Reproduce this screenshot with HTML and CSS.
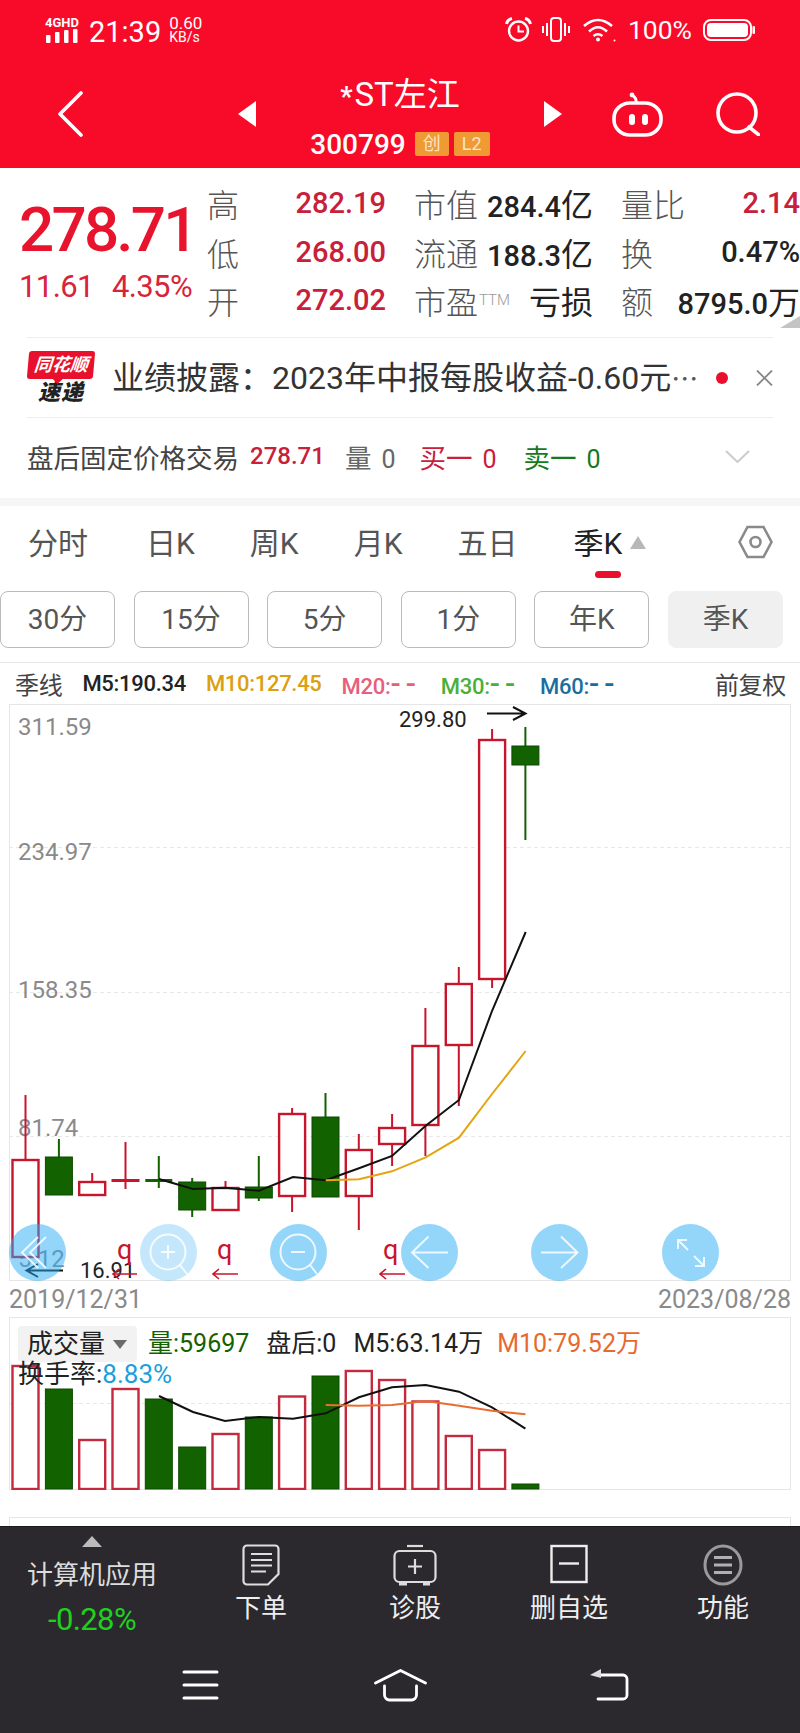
FILE: index.html
```html
<!DOCTYPE html>
<html lang="zh">
<head>
    <meta charset="UTF-8">
    <meta name="viewport" content="width=device-width, initial-scale=1.0">
    <title>*ST左江</title>
    <link rel="stylesheet" href="styles.css">
</head>
<body>
    <header class="header">
        <div class="status">
            <svg class="signal" width="34" height="27" viewBox="0 0 34 27">
                <text x="0" y="11" class="signal-text">4GHD</text>
                <rect x="1" y="19" width="4.5" height="8" rx="1" fill="#fff"/>
                <rect x="10" y="16" width="4.5" height="11" rx="1" fill="#fff"/>
                <rect x="19" y="14" width="4.5" height="13" rx="1" fill="#fff"/>
                <rect x="28" y="13" width="4.5" height="14" rx="1" fill="#fff"/>
            </svg>
            <span class="clock">21:39</span>
            <div class="speed"><span>0.60</span><span class="speed-unit">KB/s</span></div>
            <div class="status-right">
                <svg width="27" height="25" viewBox="0 0 27 25" fill="none" stroke="#fff" stroke-width="2.4">
                    <circle cx="13.5" cy="14" r="9.5"/>
                    <path d="M13.5 8.5V14.5H19" stroke-width="2"/>
                    <path d="M1.5 7Q2.5 2.5 7 1.5M25.5 7Q24.5 2.5 20 1.5" stroke-width="3"/>
                </svg>
                <svg class="vibrate" width="28" height="25" viewBox="0 0 28 25" fill="none" stroke="#fff" stroke-width="2">
                    <rect x="9" y="1" width="10" height="23" rx="3"/>
                    <path d="M5 6V19M23 6V19M1 9V16M27 9V16"/>
                </svg>
                <svg class="wifi" width="33" height="25" viewBox="0 0 33 25" fill="none" stroke="#fff" stroke-width="2.6">
                    <path d="M1 9Q15 -3 29 9M6 14.5Q15 6 24 14.5M10.5 19Q15 15.5 19.5 19"/>
                    <circle cx="15" cy="22.5" r="2" fill="#fff" stroke="none"/>
                    <circle cx="31.5" cy="23.5" r="1" fill="#fff" stroke="none"/>
                </svg>
                <span class="battery-text">100%</span>
                <svg class="battery" width="52" height="22" viewBox="0 0 52 22">
                    <rect x="1" y="1" width="47" height="20" rx="7" fill="none" stroke="#fff" stroke-width="2"/>
                    <rect x="4" y="4" width="41" height="14" rx="4" fill="#fff"/>
                    <rect x="49.5" y="7" width="2.5" height="8" rx="1" fill="#fff"/>
                </svg>
            </div>
        </div>
        <nav class="topnav">
            <svg class="back" width="26" height="46" viewBox="0 0 26 46" fill="none" stroke="#fff" stroke-width="3.6" stroke-linecap="round" stroke-linejoin="round">
                <path d="M24 2L3 23L24 44"/>
            </svg>
            <div class="tri-left"></div>
            <div class="title-box">
                <div class="stock-name"><span class="star">*</span>ST左江</div>
                <div class="stock-code">
                    <span>300799</span>
                    <span class="badge">创</span>
                    <span class="badge badge-wide">L2</span>
                </div>
            </div>
            <div class="tri-right"></div>
            <svg class="robot" width="51" height="45" viewBox="0 0 51 45" fill="none" stroke="#fff" stroke-width="3.6">
                <rect x="2" y="11" width="47" height="32" rx="16" ry="15"/>
                <path d="M24 11Q25 6 20 3" stroke-width="3"/>
                <circle cx="20" cy="3" r="2.4" fill="#fff" stroke="none"/>
                <rect x="17" y="22" width="6" height="11" rx="3" fill="#fff" stroke="none"/>
                <rect x="30" y="22" width="6" height="11" rx="3" fill="#fff" stroke="none"/>
            </svg>
            <svg class="search" width="44" height="44" viewBox="0 0 44 44" fill="none" stroke="#fff" stroke-width="3.6" stroke-linecap="round">
                <circle cx="21" cy="21" r="19"/>
                <path d="M33 35L43 43"/>
            </svg>
        </nav>
    </header>

    <section class="quote">
        <div class="price-box">
            <div class="price">278.71</div>
            <div class="change"><span>11.61</span><span>4.35%</span></div>
        </div>
        <div class="stats">
            <div class="stat"><span class="stat-label">高</span><span class="red">282.19</span></div>
            <div class="stat"><span class="stat-label">市值</span><span>284.4<span class="unit">亿</span></span></div>
            <div class="stat"><span class="stat-label">量比</span><span class="red">2.14</span></div>
            <div class="stat"><span class="stat-label">低</span><span class="red">268.00</span></div>
            <div class="stat"><span class="stat-label">流通</span><span>188.3<span class="unit">亿</span></span></div>
            <div class="stat"><span class="stat-label">换</span><span>0.47%</span></div>
            <div class="stat"><span class="stat-label">开</span><span class="red">272.02</span></div>
            <div class="stat"><span class="stat-label">市盈<span class="ttm">TTM</span></span><span class="unit">亏损</span></div>
            <div class="stat"><span class="stat-label">额</span><span>8795.0<span class="unit">万</span></span></div>
        </div>
        <div class="corner"></div>
    </section>

    <section class="news">
        <div class="logo">
            <div class="logo-flag">同花顺</div>
            <div class="logo-sub">速递</div>
        </div>
        <div class="news-text">业绩披露：2023年中报每股收益-0.60元<span class="dots">…</span></div>
        <div class="news-dot"></div>
        <svg width="17" height="16" viewBox="0 0 17 16" fill="none" stroke="#888" stroke-width="1.8">
            <path d="M1 0.5L16 15.5M16 0.5L1 15.5"/>
        </svg>
    </section>

    <section class="after-hours">
        <span class="ah-title">盘后固定价格交易</span>
        <span class="ah-price">278.71</span>
        <span class="ah-item ah-vol">量<b>0</b></span>
        <span class="ah-item ah-buy">买一<b>0</b></span>
        <span class="ah-item ah-sell">卖一<b>0</b></span>
        <svg class="ah-more" width="25" height="13" viewBox="0 0 25 13" fill="none" stroke="#ccc" stroke-width="2">
            <path d="M1 1L12.5 12L24 1"/>
        </svg>
    </section>

    <div class="band"></div>

    <section class="tabs">
        <span class="tab tab-first">分时</span>
        <span class="tab">日K</span>
        <span class="tab">周K</span>
        <span class="tab">月K</span>
        <span class="tab">五日</span>
        <span class="tab tab-active">季K<i class="tab-tri"></i><i class="tab-line"></i></span>
        <svg class="hex" width="35" height="34" viewBox="0 0 35 34" fill="none" stroke="#8a8a8a" stroke-width="2.6">
            <path d="M1.5 17L9.5 2H25.5L33.5 17L25.5 32H9.5Z"/>
            <circle cx="17.5" cy="17" r="5"/>
        </svg>
    </section>

    <section class="periods">
        <span class="period">30分</span>
        <span class="period">15分</span>
        <span class="period">5分</span>
        <span class="period">1分</span>
        <span class="period">年K</span>
        <span class="period period-active">季K</span>
    </section>

    <section class="ma-row">
        <span class="ma-name">季线</span>
        <span class="ma">M5:190.34</span>
        <span class="ma ma10">M10:127.45</span>
        <span class="ma ma20">M20:<span class="dash">--</span></span>
        <span class="ma ma30">M30:<span class="dash">--</span></span>
        <span class="ma ma60">M60:<span class="dash">--</span></span>
        <span class="ma-fq">前复权</span>
    </section>

    <section class="chart">
        <svg width="800" height="577" viewBox="0 704 800 577">
            <rect class="frame" x="9.5" y="704.5" width="781" height="576"/>
            <path class="grid" d="M9 847.5H790M9 992.5H790M9 1136.5H790"/>
            <text class="axis" x="18" y="735">311.59</text>
            <text class="axis" x="18" y="860">234.97</text>
            <text class="axis" x="18" y="998">158.35</text>
            <text class="axis" x="18" y="1136">81.74</text>
            <text class="axis" x="18" y="1267">5.12</text>

            <path class="wick-red" d="M25.5 1095V1159M92.2 1173V1181M125.5 1142V1189M225.5 1181V1187M292.1 1108V1113M292.1 1197V1212M358.8 1134V1149M358.8 1197V1230M392.1 1114V1127M392.1 1144V1166M425.4 1008V1045M425.4 1126V1156M458.8 967V983M458.8 1045V1106M492.1 729V739M492.1 979V988"/>
            <path class="wick-green" d="M58.9 1139V1158M158.8 1156V1188M192.2 1178V1217M258.8 1156V1201M325.5 1093V1118M525.4 727V840"/>

            <rect class="up" x="12.5" y="1160" width="26" height="97"/>
            <rect class="down" x="45.4" y="1157" width="27" height="38"/>
            <rect class="up" x="79.2" y="1182" width="26" height="13"/>
            <rect class="red-fill" x="111.5" y="1179" width="28" height="3"/>
            <rect class="green-fill" x="145.3" y="1179" width="27" height="3"/>
            <rect class="down" x="178.7" y="1182" width="27" height="28"/>
            <rect class="up" x="212.5" y="1188" width="26" height="22"/>
            <rect class="down" x="245.3" y="1187" width="27" height="11"/>
            <rect class="up" x="279.1" y="1114" width="26" height="82"/>
            <rect class="down" x="312" y="1117" width="27" height="80"/>
            <rect class="up" x="345.8" y="1150" width="26" height="46"/>
            <rect class="up" x="379.1" y="1128" width="26" height="16"/>
            <rect class="up" x="412.4" y="1046" width="26" height="79"/>
            <rect class="up" x="445.8" y="984" width="26" height="61"/>
            <rect class="up" x="479.1" y="740" width="26" height="239"/>
            <rect class="down" x="511.9" y="746" width="27" height="19"/>

            <polyline class="ma5" points="159,1179 193,1189 225,1187.7 259,1190.7 293,1177 325.7,1180.3 359,1168.3 392,1156 425.7,1125.7 459,1100 492,1011 525.7,932"/>
            <polyline class="ma10-line" points="325.7,1180.3 359,1179.3 392,1171.3 425.7,1157.3 459,1137.7 492,1094 525.7,1051"/>

            <text class="mark" x="399" y="727">299.80</text>
            <path class="arrow" d="M487 713.5H525M513 707L525.5 713.5L513 720"/>
            <text class="mark" x="80" y="1278">16.91</text>
            <path class="arrow" d="M63 1270.5H27M38 1264L26.5 1270.5L38 1277"/>

            <text class="q" x="117" y="1259">q</text>
            <text class="q" x="217" y="1259">q</text>
            <text class="q" x="383" y="1259">q</text>
            <path class="arrow-red" d="M137 1274H113M119 1269L113 1274L119 1279M238 1274H213M219 1269L213 1274L219 1279M405 1274H380M386 1269L380 1274L386 1279"/>
        </svg>
        <div class="chart-tools">
            <div class="tool">
                <svg width="57" height="57" viewBox="0 0 57 57">
                    <path d="M37 13L21 28.5L37 44M29 13L13 28.5L29 44"/>
                </svg>
            </div>
            <div class="tool tool-faded">
                <svg width="57" height="57" viewBox="0 0 57 57">
                    <circle cx="28" cy="28" r="17.5"/>
                    <path d="M28 21V35M21 28H35M40 41L47 50"/>
                </svg>
            </div>
            <div class="tool">
                <svg width="57" height="57" viewBox="0 0 57 57">
                    <circle cx="28" cy="28" r="17.5"/>
                    <path d="M21 28H35M40 41L47 50"/>
                </svg>
            </div>
            <div class="tool">
                <svg width="57" height="57" viewBox="0 0 57 57">
                    <path d="M47 28.5H11M27.5 12.5L11 28.5L27.5 44"/>
                </svg>
            </div>
            <div class="tool">
                <svg width="57" height="57" viewBox="0 0 57 57">
                    <path d="M10 28.5H46.5M30 12.5L46.5 28.5L30 44"/>
                </svg>
            </div>
            <div class="tool">
                <svg width="57" height="57" viewBox="0 0 57 57">
                    <path d="M16 16L26 26M16 25V16H25M42 42L32 32M42 33V42H33"/>
                </svg>
            </div>
        </div>
    </section>

    <section class="dates">
        <span>2019/12/31</span>
        <span>2023/08/28</span>
    </section>

    <section class="volume">
        <svg width="800" height="173" viewBox="0 1317 800 173">
            <rect class="frame" x="9.5" y="1317.5" width="781" height="172"/>
            <path class="grid" d="M9 1403.5H790"/>
            <rect class="vol-up" x="12.5" y="1366" width="26" height="123"/>
            <rect class="down" x="45.4" y="1389" width="27" height="100"/>
            <rect class="vol-up" x="79.2" y="1440" width="26" height="49"/>
            <rect class="vol-up" x="112.5" y="1389" width="26" height="100"/>
            <rect class="down" x="145.3" y="1399" width="27" height="90"/>
            <rect class="down" x="178.7" y="1447" width="27" height="42"/>
            <rect class="vol-up" x="212.5" y="1434" width="26" height="55"/>
            <rect class="down" x="245.3" y="1417" width="27" height="72"/>
            <rect class="vol-up" x="279.1" y="1396.5" width="26" height="92.5"/>
            <rect class="down" x="312" y="1376" width="27" height="113"/>
            <rect class="vol-up" x="345.8" y="1371" width="26" height="118"/>
            <rect class="vol-up" x="379.1" y="1380" width="26" height="109"/>
            <rect class="vol-up" x="412.4" y="1401.5" width="26" height="87.5"/>
            <rect class="vol-up" x="445.8" y="1436" width="26" height="53"/>
            <rect class="vol-up" x="479.1" y="1450" width="26" height="39"/>
            <rect class="down" x="511.9" y="1484" width="27" height="5"/>
            <polyline class="ma5" points="159,1396 193,1412 225,1421 259,1417 293,1418.7 325.7,1413.3 359,1397.3 392,1387.3 425.7,1385 459,1391.7 492,1407.3 525.4,1428.7"/>
            <polyline class="vol-ma10" points="325.7,1405 359,1405.7 392,1405 425.7,1401 459,1405.7 492,1410.7 525.4,1414.3"/>
        </svg>
        <div class="vol-legend">
            <span class="vol-pill">成交量<i class="vol-tri"></i></span>
            <span class="vol-green">量:59697</span>
            <span>盘后:0</span>
            <span>M5:63.14万</span>
            <span class="vol-orange">M10:79.52万</span>
        </div>
        <div class="vol-rate">换手率:<span class="vol-blue">8.83%</span></div>
    </section>

    <div class="stub"></div>

    <footer class="dock">
        <div class="dock-main">
            <div class="dock-sector">
                <i class="dock-tri"></i>
                <span class="sector-name">计算机应用</span>
                <span class="sector-change">-0.28%</span>
            </div>
            <div class="dock-item">
                <svg width="38" height="42" viewBox="0 0 38 42" fill="none" stroke="#ddd" stroke-width="2.2">
                    <path d="M5 1.5H33A3.5 3.5 0 0 1 36.5 5V30L26 40.5H5A3.5 3.5 0 0 1 1.5 37V5A3.5 3.5 0 0 1 5 1.5Z"/>
                    <path d="M9 10H30M9 16H30M9 21.5H30M9 27.5H24"/>
                </svg>
                <span>下单</span>
            </div>
            <div class="dock-item">
                <svg width="44" height="42" viewBox="0 0 44 42" fill="none" stroke="#ddd" stroke-width="2.2">
                    <path d="M14 2H30"/>
                    <rect x="1.5" y="7" width="41" height="31" rx="5"/>
                    <path d="M22 15V30M15 22.5H29"/>
                    <path d="M6 40H14M30 40H37" stroke-width="3"/>
                </svg>
                <span>诊股</span>
            </div>
            <div class="dock-item">
                <svg width="38" height="42" viewBox="0 0 38 42" fill="none" stroke="#eee" stroke-width="2.4">
                    <rect x="1.5" y="2" width="35" height="36"/>
                    <path d="M9 19.5H29"/>
                </svg>
                <span>删自选</span>
            </div>
            <div class="dock-item">
                <svg width="40" height="42" viewBox="0 0 40 42" fill="none" stroke="#9a9a9a" stroke-width="3">
                    <ellipse cx="20" cy="21" rx="18" ry="19"/>
                    <path d="M11 13.5H29M11 21H29M11 28.5H29" stroke="#b0b0b0"/>
                </svg>
                <span>功能</span>
            </div>
        </div>
        <div class="dock-nav">
            <svg width="37" height="30" viewBox="0 0 37 30" fill="none" stroke="#fff" stroke-width="3" stroke-linecap="round">
                <path d="M2 2H35M2 15H35M2 28H35"/>
            </svg>
            <svg class="nav-home" width="53" height="33" viewBox="0 0 53 33" fill="none" stroke="#fff" stroke-width="2.8" stroke-linecap="round" stroke-linejoin="round">
                <path d="M1.5 14L26.5 1.5L51.5 14"/>
                <path d="M10.5 17V26A5 5 0 0 0 15.5 31H37.5A5 5 0 0 0 42.5 26V17"/>
            </svg>
            <svg class="nav-back" width="39" height="32" viewBox="0 0 39 32" fill="none" stroke="#fff" stroke-width="2.8" stroke-linecap="round">
                <path d="M8 6H33A4 4 0 0 1 37 10V26A4 4 0 0 1 33 30H8"/>
                <path d="M0 6L11 0V9Z" fill="#ddd" stroke="none"/>
            </svg>
        </div>
    </footer>
</body>
</html>
```
FILE: styles.css
```css
* {
    box-sizing: border-box;
}

body {
    margin: 0;
    width: 800px;
    height: 1733px;
    overflow: hidden;
    background-color: #fff;
    font-family: Roboto, "Noto Sans CJK SC", sans-serif;
    color: #222;
}

i {
    display: block;
}

/* header */
.header {
    height: 168px;
    background-color: #f70b28;
    color: #fff;
}

.status {
    display: flex;
    align-items: center;
    height: 66px;
    padding: 16px 45px 23px;
}

.signal-text {
    font-size: 13px;
    font-weight: 700;
    fill: #fff;
}

.clock {
    margin-left: 10px;
    font-size: 29px;
    line-height: 27px;
    padding-top: 6px;
}

.speed {
    display: flex;
    flex-direction: column;
    margin-left: 8px;
    font-size: 17px;
    line-height: 14px;
}

.speed-unit {
    font-size: 14px;
}

.status-right {
    display: flex;
    align-items: center;
    margin-left: auto;
}

.vibrate {
    margin-left: 10px;
}

.wifi {
    margin-left: 13px;
}

.battery-text {
    margin-left: 12px;
    font-size: 26.5px;
    line-height: 27px;
}

.battery {
    margin-left: 11px;
}

.topnav {
    display: flex;
    align-items: center;
    height: 96px;
}

.back {
    margin-left: 57px;
}

.tri-left {
    margin-left: 155px;
    border-style: solid;
    border-width: 13px 18px 13px 0;
    border-color: transparent #fff transparent transparent;
}

.tri-right {
    border-style: solid;
    border-width: 13px 0 13px 18px;
    border-color: transparent transparent transparent #fff;
}

.title-box {
    align-self: flex-start;
    width: 288px;
    padding-top: 10px;
    text-align: center;
}

.stock-name {
    font-size: 33px;
    line-height: 38px;
}

.star {
    font-size: 27px;
    font-weight: 700;
    margin-right: 2px;
}

.stock-code {
    display: flex;
    justify-content: center;
    align-items: center;
    gap: 5px;
    margin-top: 16px;
    height: 24px;
    font-size: 28px;
    font-weight: 500;
}

.stock-code span:first-child {
    margin-right: 4px;
}

.badge {
    display: block;
    width: 34px;
    height: 24px;
    border-radius: 2px;
    background-color: #f09a33;
    color: #fbe3c4;
    font-size: 18px;
    font-weight: 400;
    line-height: 24px;
    text-align: center;
}

.badge-wide {
    width: 36px;
}

.robot {
    margin-left: 50px;
}

.search {
    margin-left: 53px;
}

/* quote */
.quote {
    position: relative;
    display: flex;
    height: 169px;
    padding-top: 11px;
}

.price-box {
    width: 207px;
    padding-left: 19px;
}

.price {
    margin-top: 26px;
    font-size: 62px;
    font-weight: 500;
    line-height: 50px;
    letter-spacing: -2.8px;
    color: #e8132d;
}

.change {
    display: flex;
    gap: 18px;
    margin-top: 15px;
    font-size: 31px;
    line-height: 34px;
    letter-spacing: -0.6px;
    color: #d8233a;
}

.stats {
    display: grid;
    grid-template-columns: repeat(3, 179px);
    grid-auto-rows: 48.5px;
    column-gap: 28px;
}

.stat {
    display: flex;
    justify-content: space-between;
    align-items: center;
    font-size: 29px;
    font-weight: 500;
    white-space: nowrap;
}

.stat-label {
    font-size: 32px;
    font-weight: 300;
    color: #555;
}

.unit {
    font-size: 32px;
    font-weight: 400;
}

.red {
    color: #c8203a;
}

.ttm {
    margin-left: 1px;
    font-size: 15px;
    vertical-align: 9px;
    color: #999;
}

.corner {
    position: absolute;
    right: 0;
    bottom: 9px;
    border-style: solid;
    border-width: 0 0 12px 20px;
    border-color: transparent transparent #c4c4c4 transparent;
}

/* news */
.news {
    display: flex;
    align-items: center;
    height: 81px;
    margin: 0 27px;
    border-top: 1px solid #eee;
    border-bottom: 1px solid #eee;
}

.logo {
    width: 66px;
    margin-left: 1px;
    text-align: center;
}

.logo-flag {
    position: relative;
    height: 28px;
    border-radius: 3px;
    background-color: #e8102c;
    color: #fff;
    font-size: 18px;
    font-weight: 700;
    font-style: italic;
    line-height: 28px;
    transform: skewX(-5deg);
}

.logo-flag::after {
    content: "";
    position: absolute;
    left: 26px;
    bottom: -5px;
    border-style: solid;
    border-width: 5px 5px 0 5px;
    border-color: #e8102c transparent transparent transparent;
}

.logo-sub {
    margin-top: 2px;
    font-size: 22px;
    font-weight: 900;
    font-style: italic;
    line-height: 24px;
    letter-spacing: 1px;
}

.news-text {
    margin-left: 18px;
    font-size: 32px;
    line-height: 40px;
    white-space: nowrap;
    color: #333;
}

.dots {
    font-family: "Noto Sans CJK SC", sans-serif;
    font-size: 27px;
    color: #555;
}

.news-dot {
    width: 12px;
    height: 12px;
    margin-left: auto;
    margin-right: 28px;
    border-radius: 50%;
    background-color: #e8102c;
}

/* after hours row */
.after-hours {
    display: flex;
    align-items: center;
    height: 80px;
    padding: 0 0 4px 27px;
    font-size: 26.5px;
}

.ah-title {
    color: #444;
}

.ah-price {
    margin-left: 11px;
    font-size: 24px;
    font-weight: 500;
    color: #c8203a;
}

.ah-item b {
    margin-left: 10px;
    font-weight: 400;
    font-size: 25px;
}

.ah-vol {
    margin-left: 20px;
    color: #666;
}

.ah-buy {
    margin-left: 24px;
    color: #c8203a;
}

.ah-sell {
    margin-left: 27px;
    color: #147a1e;
}

.ah-more {
    margin-left: auto;
    margin-right: 50px;
}

.band {
    height: 8px;
    background-color: #f6f6f6;
}

/* tabs */
.tabs {
    display: flex;
    gap: 55px;
    height: 85px;
    padding: 23px 27px 0 28px;
}

.tab {
    position: relative;
    height: 30px;
    font-size: 30px;
    line-height: 30px;
    color: #555;
    white-space: nowrap;
}

.tab-first {
    margin-right: 3px;
}

.tab-active {
    padding-right: 24px;
    margin-left: 1px;
    color: #222;
}

.tab-tri {
    position: absolute;
    right: 0;
    top: 7px;
    border-style: solid;
    border-width: 0 8px 13px 8px;
    border-color: transparent transparent #b8b8b8 transparent;
}

.tab-line {
    position: absolute;
    left: 22px;
    top: 42px;
    width: 26px;
    height: 7px;
    border-radius: 4px;
    background-color: #e8102c;
}

.hex {
    margin-left: auto;
    margin-top: -4px;
}

/* periods */
.periods {
    display: grid;
    grid-template-columns: repeat(6, 115px);
    column-gap: 18.6px;
    height: 71px;
}

.period {
    height: 57px;
    border: 1px solid #bbb;
    border-radius: 8px;
    font-size: 28px;
    line-height: 55px;
    text-align: center;
    color: #555;
}

.period-active {
    border-color: #f0f0f0;
    background-color: #f0f0f0;
}

/* ma row */
.ma-row {
    display: flex;
    align-items: center;
    gap: 20px;
    height: 42px;
    padding: 0 14px 0 15px;
    border-top: 1px solid #e8e8e8;
    font-size: 22px;
    font-weight: 500;
    letter-spacing: -0.3px;
    white-space: nowrap;
}

.ma-name,
.ma-fq {
    font-size: 24px;
    font-weight: 400;
    color: #444;
}

.ma10 {
    color: #dca00e;
}

.ma20 {
    color: #e6607c;
}

.ma30 {
    color: #4caf3a;
}

.ma60 {
    color: #1a6e9e;
}

.dash {
    font-size: 30px;
    line-height: 1;
    letter-spacing: 5px;
}

.ma-fq {
    margin-left: auto;
}

/* charts */
.chart {
    position: relative;
    height: 577px;
}

.chart svg,
.volume svg {
    display: block;
}

.frame {
    fill: none;
    stroke: #e6e6e6;
}

.grid {
    fill: none;
    stroke: #e8e8e8;
    stroke-dasharray: 4 3;
}

.axis {
    font-size: 24px;
    fill: #8a8a8a;
}

.mark {
    font-size: 22px;
    fill: #222;
}

.q {
    font-size: 27px;
    fill: #c9152c;
}

.up {
    fill: #fff;
    stroke: #c9152c;
    stroke-width: 2.4;
}

.down {
    fill: #136200;
    stroke: #0d4a00;
    stroke-width: 1;
}

.vol-up {
    fill: #fff;
    stroke: #c42a3e;
    stroke-width: 2.4;
}

.red-fill {
    fill: #c9152c;
}

.green-fill {
    fill: #136200;
}

.wick-red {
    fill: none;
    stroke: #c9152c;
    stroke-width: 2;
}

.wick-green {
    fill: none;
    stroke: #136200;
    stroke-width: 2;
}

.ma5 {
    fill: none;
    stroke: #111;
    stroke-width: 2;
}

.ma10-line {
    fill: none;
    stroke: #e3a512;
    stroke-width: 2;
}

.vol-ma10 {
    fill: none;
    stroke: #e96c30;
    stroke-width: 2;
}

.arrow {
    fill: none;
    stroke: #111;
    stroke-width: 2;
}

.arrow-red {
    fill: none;
    stroke: #c9152c;
    stroke-width: 1.6;
}

.chart-tools {
    position: absolute;
    left: 9px;
    bottom: 0;
    display: flex;
    gap: 73.5px;
}

.tool {
    width: 57px;
    height: 57px;
    border-radius: 50%;
    background-color: rgba(41, 171, 245, 0.5);
}

.tool-faded {
    opacity: 0.55;
}

.tool svg {
    fill: none;
    stroke: #fff;
    stroke-width: 2;
    opacity: 0.85;
}

.dates {
    display: flex;
    justify-content: space-between;
    align-items: center;
    height: 36px;
    margin: 0 9px;
    font-size: 25px;
    color: #8a8a8a;
}

.volume {
    position: relative;
    height: 173px;
}

.vol-legend {
    position: absolute;
    left: 18px;
    top: 9px;
    display: flex;
    align-items: center;
    gap: 17px;
    font-size: 25px;
    line-height: 36px;
    white-space: nowrap;
}

.vol-pill {
    display: flex;
    align-items: center;
    width: 119px;
    height: 36px;
    margin-right: -6px;
    padding-left: 9px;
    border-radius: 4px;
    background-color: #f2f2f2;
    font-size: 26px;
}

.vol-tri {
    margin-left: 8px;
    border-style: solid;
    border-width: 9px 7px 0 7px;
    border-color: #6a6a6a transparent transparent transparent;
}

.vol-green {
    color: #136200;
}

.vol-orange {
    margin-left: -3px;
    color: #e8682f;
}

.vol-rate {
    position: absolute;
    left: 18px;
    top: 42px;
    font-size: 26px;
    line-height: 30px;
    white-space: nowrap;
}

.vol-blue {
    color: #1aa0dd;
}

.stub {
    height: 9px;
    margin: 27px 9px 0;
    border: 1px solid #e6e6e6;
    border-bottom: none;
}

/* dock */
.dock {
    height: 207px;
    border-top: 1px solid #1a1a1a;
    background-color: #2b292e;
}

.dock-main {
    display: grid;
    grid-template-columns: 184px repeat(4, 154px);
    height: 110px;
}

.dock-sector,
.dock-item {
    display: flex;
    flex-direction: column;
    align-items: center;
}

.dock-sector {
    padding-top: 9px;
}

.dock-tri {
    border-style: solid;
    border-width: 0 10px 11px 10px;
    border-color: transparent transparent #bbb transparent;
}

.sector-name {
    margin-top: 13px;
    font-size: 26px;
    line-height: 30px;
    color: #ddd;
}

.sector-change {
    margin-top: 13px;
    font-size: 31px;
    line-height: 34px;
    letter-spacing: -0.6px;
    color: #1fd11f;
}

.dock-item {
    padding-top: 17px;
    font-size: 26px;
    line-height: 30px;
    color: #eee;
}

.dock-item span {
    margin-top: 7px;
}

.dock-nav {
    display: flex;
    align-items: center;
    height: 96px;
    padding-left: 182px;
}

.nav-home {
    margin-left: 155px;
}

.nav-back {
    margin-left: 163px;
}
```
